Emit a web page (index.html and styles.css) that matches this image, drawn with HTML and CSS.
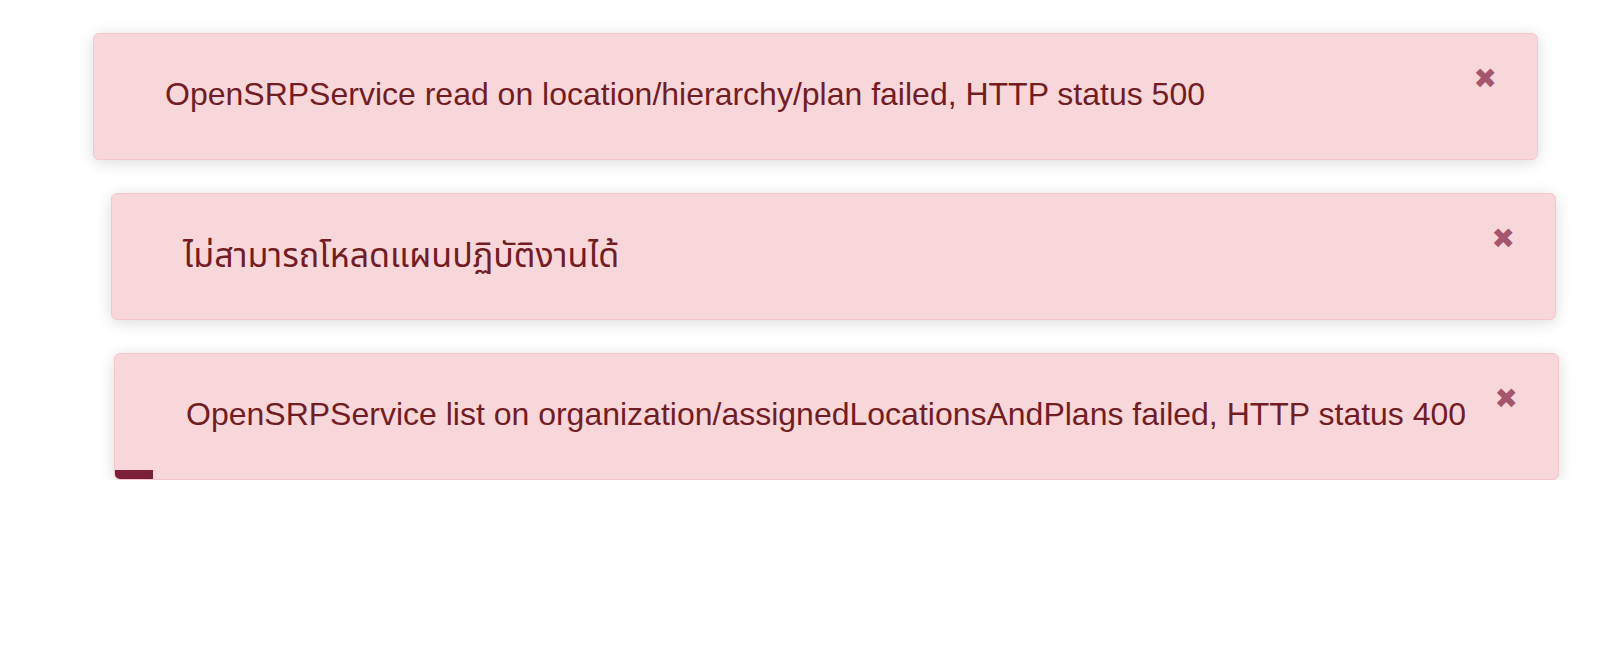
FILE: index.html
```html
<!DOCTYPE html>
<html>
<head>
<meta charset="utf-8">
<link rel="stylesheet" href="styles.css">
</head>
<body>
<div class="stack">
  <div class="toast t1">
    <div class="msg">OpenSRPService read on location/hierarchy/plan failed, HTTP status 500</div>
    <span class="close">✖</span>
  </div>
  <div class="toast t2">
    <div class="msg thai">ไม่สามารถโหลดแผนปฏิบัติงานได้</div>
    <span class="close">✖</span>
  </div>
  <div class="toast t3">
    <div class="msg">OpenSRPService list on organization/assignedLocationsAndPlans failed, HTTP status 400</div>
    <span class="close">✖</span>
    <div class="progress"></div>
  </div>
</div>
</body>
</html>
```
FILE: styles.css
```css
html, body {
  margin: 0;
  padding: 0;
  background: #fff;
}
.stack {
  display: flex;
  flex-direction: column;
  gap: 33px;
  padding-top: 33px;
}
.toast {
  position: relative;
  box-sizing: border-box;
  width: 1445px;
  height: 127px;
  background: #f8d7da;
  border: 1px solid #f5c6cb;
  border-radius: 6px;
  box-shadow: 0 2px 14px rgba(0,0,0,0.1), 0 4px 22px rgba(0,0,0,0.05);
  color: #721c24;
  display: flex;
  align-items: center;
  padding-left: 71px;
  overflow: hidden;
}
.t1 { margin-left: 93px; }
.t2 { margin-left: 111px; }
.t3 { margin-left: 114px; }
.msg {
  font-family: "Liberation Sans", Arial, sans-serif;
  font-size: 32px;
  line-height: 1.2;
  padding-bottom: 4px;
}
.thai {
  font-size: 34px;
  font-family: "Liberation Sans", "Noto Sans Thai", "Noto Serif Thai", sans-serif;
  padding-bottom: 2px;
}
.close {
  position: absolute;
  top: 31px;
  right: 40px;
  font-family: "DejaVu Sans", sans-serif;
  font-size: 28px;
  color: #a4566d;
  line-height: 1;
}
.progress {
  position: absolute;
  left: 0;
  bottom: 0;
  width: 38px;
  height: 9px;
  background: #7b1f3b;
}
```
